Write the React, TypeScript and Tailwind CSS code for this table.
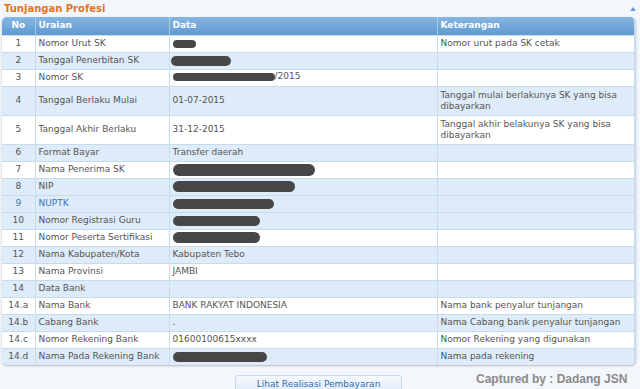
import React from "react";

type Row = {
  no: string;
  label: string;
  data?: React.ReactNode;
  ket?: React.ReactNode;
  tall?: boolean;
  blue: boolean;
  link?: boolean;
};

const Blob = ({ w, h = 10, ml = 0 }: { w: number; h?: number; ml?: number }) => (
  <span
    className="inline-block rounded-full bg-[#474747] align-middle"
    style={{ width: w, height: h, marginLeft: ml }}
  />
);

const rows: Row[] = [
  { no: "1", label: "Nomor Urut SK", data: <Blob w={23} h={8} />, ket: "Nomor urut pada SK cetak", blue: false },
  { no: "2", label: "Tanggal Penerbitan SK", data: <Blob w={60} h={10} ml={-2} />, blue: true },
  {
    no: "3",
    label: "Nomor SK",
    data: (
      <span className="inline-flex items-center">
        <Blob w={102} h={8} />
        <span>/2015</span>
      </span>
    ),
    blue: false,
  },
  {
    no: "4",
    label: "Tanggal Berlaku Mulai",
    data: "01-07-2015",
    ket: (
      <>
        Tanggal mulai berlakunya SK yang bisa
        <br />
        dibayarkan
      </>
    ),
    tall: true,
    blue: true,
  },
  {
    no: "5",
    label: "Tanggal Akhir Berlaku",
    data: "31-12-2015",
    ket: (
      <>
        Tanggal akhir belakunya SK yang bisa
        <br />
        dibayarkan
      </>
    ),
    tall: true,
    blue: false,
  },
  { no: "6", label: "Format Bayar", data: "Transfer daerah", blue: true },
  { no: "7", label: "Nama Penerima SK", data: <Blob w={142} h={12} />, blue: false },
  { no: "8", label: "NIP", data: <Blob w={122} h={11} />, blue: true },
  { no: "9", label: "NUPTK", data: <Blob w={101} h={10} />, blue: true, link: true },
  { no: "10", label: "Nomor Registrasi Guru", data: <Blob w={87} h={10} />, blue: true },
  { no: "11", label: "Nomor Peserta Sertifikasi", data: <Blob w={87} h={11} />, blue: false },
  { no: "12", label: "Nama Kabupaten/Kota", data: "Kabupaten Tebo", blue: true },
  { no: "13", label: "Nama Provinsi", data: "JAMBI", blue: false },
  { no: "14", label: "Data Bank", data: "", blue: true },
  { no: "14.a", label: "Nama Bank", data: "BANK RAKYAT INDONESIA", ket: "Nama bank penyalur tunjangan", blue: false },
  { no: "14.b", label: "Cabang Bank", data: ".", ket: "Nama Cabang bank penyalur tunjangan", blue: true },
  { no: "14.c", label: "Nomor Rekening Bank", data: "01600100615xxxx", ket: "Nomor Rekening yang digunakan", blue: false },
  { no: "14.d", label: "Nama Pada Rekening Bank", data: <Blob w={94} h={10} />, ket: "Nama pada rekening", blue: true },
];

export default function App() {
  return (
    <div
      className="w-[640px] h-[389px] overflow-hidden bg-[#f3f6fa] text-[#555]"
      style={{ fontFamily: '"DejaVu Sans", Verdana, sans-serif' }}
    >
      <div className="relative flex h-[17px] items-center px-[4px]">
        <span className="text-[10px] font-bold leading-none text-[#e6731e]">Tunjangan Profesi</span>
        <svg className="absolute right-[4px] top-[7px]" width="6" height="4" viewBox="0 0 6 4">
          <path d="M3 0 L6 4 L0 4 Z" fill="#6a9fd2" />
        </svg>
      </div>
      <div className="pl-[2px] pr-[4px]">
        <div className="overflow-hidden rounded-[5px] border-r-[2px] border-[#c9dcef] bg-white shadow-[0_1px_2px_rgba(0,0,0,0.25)]">
          <table className="w-full table-fixed border-collapse text-[9px]">
            <colgroup>
              <col className="w-[33px]" />
              <col className="w-[134px]" />
              <col className="w-[268px]" />
              <col />
            </colgroup>
            <thead>
              <tr className="h-[18px] bg-gradient-to-b from-[#86b6e2] to-[#609ad1] text-white">
                <th className="border-r border-[#a9c9e9] text-center font-bold">No</th>
                <th className="border-r border-[#a9c9e9] pl-[3px] text-left font-bold">Uraian</th>
                <th className="border-r border-[#a9c9e9] pl-[3px] text-left font-bold">Data</th>
                <th className="pl-[3px] text-left font-bold">Keterangan</th>
              </tr>
            </thead>
            <tbody>
              {rows.map((r) => (
                <tr
                  key={r.no}
                  className={`${r.tall ? "h-[29px]" : "h-[17px]"} ${r.blue ? "bg-[#deebf8]" : "bg-white"} ${
                    r.link ? "text-[#3677b8]" : ""
                  } border-t border-[#c6dbee]`}
                >
                  <td className="border-r border-[#c6dbee] text-center leading-[11px]">{r.no}</td>
                  <td className="border-r border-[#c6dbee] pl-[3px] leading-[11px] whitespace-nowrap">{r.label}</td>
                  <td className="border-r border-[#c6dbee] pl-[3px] leading-[11px] whitespace-nowrap">{r.data}</td>
                  <td className="pl-[3px] leading-[11px] whitespace-nowrap">{r.ket}</td>
                </tr>
              ))}
            </tbody>
          </table>
        </div>
      </div>
      <div className="relative mt-[10px] flex">
        <div className="ml-[235px] flex h-[16px] w-[167px] items-start justify-center rounded-t-[3px] border border-[#c7d9ec] bg-gradient-to-b from-[#f7fafd] to-[#e3edf8] pt-[2px] text-[9px] text-[#2f6fae]">
          Lihat Realisasi Pembayaran
        </div>
        <span
          className="absolute left-[476px] top-[-5px] text-[12px] font-bold text-[#8a8a8a]"
          style={{ fontFamily: '"Liberation Sans", Arial, sans-serif' }}
        >
          Captured by : Dadang JSN
        </span>
      </div>
    </div>
  );
}
